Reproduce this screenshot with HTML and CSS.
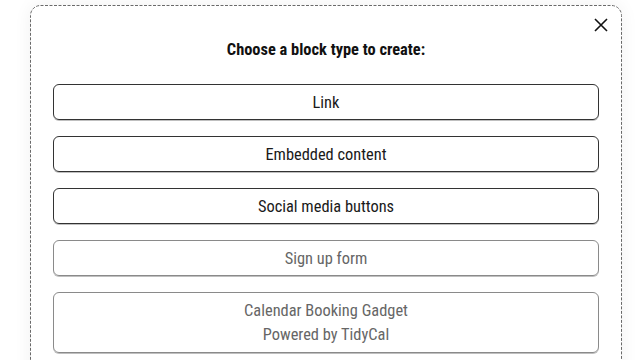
FILE: index.html
```html
<!DOCTYPE html>
<html>
<head>
<meta charset="utf-8">
<link rel="stylesheet" href="styles.css">
</head>
<body>
<div class="modal">
  <svg class="frame" width="592" height="420" viewBox="0 0 592 420" aria-hidden="true"><rect x="0.5" y="0.5" width="591" height="419" rx="10" ry="10" fill="none" stroke="#6a6a6a" stroke-width="1" stroke-dasharray="3 1.5"/></svg>
  <button class="close" aria-label="Close">
    <svg width="16" height="16" viewBox="0 0 16 16"><path d="M2 2 L14 14 M14 2 L2 14" stroke="#111" stroke-width="1.6" fill="none"/></svg>
  </button>
  <h2 class="title">Choose a block type to create:</h2>
  <div class="options">
    <div class="opt">Link</div>
    <div class="opt">Embedded content</div>
    <div class="opt">Social media buttons</div>
    <div class="opt disabled">Sign up form</div>
    <div class="opt disabled two">Calendar Booking Gadget<br>Powered by TidyCal</div>
  </div>
</div>
</body>
</html>
```
FILE: styles.css
```css
html, body { margin: 0; padding: 0; background: #fff; }
body {
  font-family: "Roboto Condensed", Roboto, "Liberation Sans", sans-serif;
  color: #1a1a1a;
  overflow: hidden;
}
.modal {
  position: relative;
  box-sizing: border-box;
  width: 592px;
  height: 420px;
  margin: 5px 0 0 30px;
  border-radius: 10px;
  padding: 35px 23px 22px;
  box-shadow: 0 0 18px rgba(0,0,0,0.06);
  background: #fff;
}
.frame {
  position: absolute;
  left: 0;
  top: 0;
  pointer-events: none;
}
.close {
  position: absolute;
  top: 12px;
  right: 13px;
  border: 0;
  background: none;
  padding: 0;
  width: 16px;
  height: 16px;
}
.close svg { display: block; }
.title {
  margin: 0 0 24px;
  text-align: center;
  font-size: 16.4px;
  line-height: 20px;
  font-weight: 700;
  color: #111;
}
.options {
  display: flex;
  flex-direction: column;
  gap: 16px;
}
.opt {
  box-sizing: border-box;
  height: 36px;
  padding-top: 1px;
  border: 1px solid #333;
  border-radius: 6px;
  box-shadow: 0 1px 0 rgba(0,0,0,0.25);
  display: flex;
  align-items: center;
  justify-content: center;
  text-align: center;
  font-size: 16.4px;
  line-height: 24px;
  color: #1a1a1a;
}
.opt.disabled {
  border-color: #8a8a8a;
  color: #666;
}
.opt.two {
  height: 61px;
}
```
